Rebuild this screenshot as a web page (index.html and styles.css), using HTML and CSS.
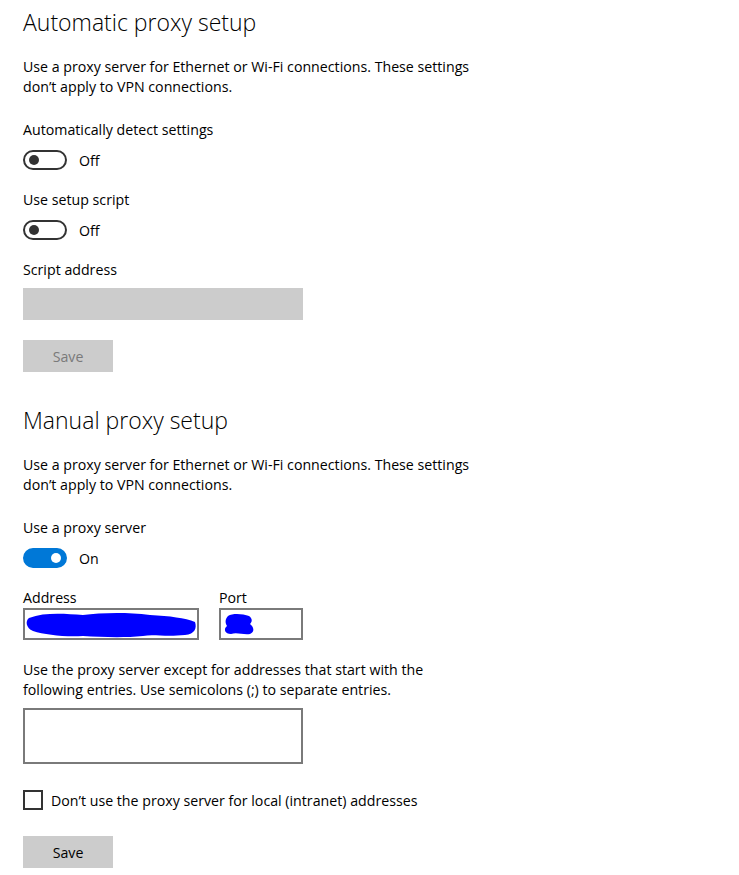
FILE: index.html
```html
<!DOCTYPE html>
<html lang="en">

<head>
    <meta charset="UTF-8">
    <title>Proxy</title>
    <link rel="stylesheet" href="styles.css">
</head>

<body>
    <div class="page">
        <!-- Automatic -->
        <h2 class="title first">Automatic proxy setup</h2>
        <p class="desc">Use a proxy server for Ethernet or Wi-Fi connections. These settings<br>don’t apply to VPN connections.</p>

        <div class="label gap-top">Automatically detect settings</div>
        <div class="toggle-row">
            <span class="toggle"></span>
            <span class="toggle-text">Off</span>
        </div>

        <div class="label gap-top2">Use setup script</div>
        <div class="toggle-row">
            <span class="toggle"></span>
            <span class="toggle-text">Off</span>
        </div>

        <div class="label gap-top2">Script address</div>
        <div class="field wide disabled"></div>
        <button class="btn disabled-btn">Save</button>

        <!-- Manual -->
        <h2 class="title">Manual proxy setup</h2>
        <p class="desc">Use a proxy server for Ethernet or Wi-Fi connections. These settings<br>don’t apply to VPN connections.</p>

        <div class="label gap-top">Use a proxy server</div>
        <div class="toggle-row">
            <span class="toggle on"></span>
            <span class="toggle-text">On</span>
        </div>

        <div class="addr-row">
            <div class="addr-col">
                <div class="label">Address</div>
                <div class="field addr">
                    <svg width="172" height="28" viewBox="0 0 172 28">
                        <path d="M4 8 C20 2 40 4 58 5 C75 3 100 2 125 5 C145 6 160 8 170 12 C172 18 170 24 160 25 C140 27 128 24 118 26 C98 28 76 27 58 26 C40 27 20 25 8 21 C1 18 0 11 4 8 Z" fill="#0000ff"/>
                    </svg>
                </div>
            </div>
            <div class="port-col">
                <div class="label">Port</div>
                <div class="field port">
                    <svg width="80" height="28" viewBox="0 0 80 28">
                        <path d="M7 6 C12 3 22 4 28 6 C32 9 31 12 29 14 C33 17 34 22 29 24 C22 25 16 22 10 24 C4 24 2 19 6 16 C4 13 4 9 7 6 Z" fill="#0000ff"/>
                    </svg>
                </div>
            </div>
        </div>

        <p class="desc gap-top3">Use the proxy server except for addresses that start with the<br>following entries. Use semicolons (;) to separate entries.</p>
        <div class="field wide area"></div>

        <div class="check-row">
            <span class="check"></span>
            <span class="check-text">Don’t use the proxy server for local (intranet) addresses</span>
        </div>

        <button class="btn">Save</button>
    </div>
</body>

</html>
```

FILE: styles.css
```css
body {
    font-family: "Open Sans", Arial, sans-serif;
    margin: 0;
    padding: 0;
    background-color: #ffffff;
    color: #000000;
}

.page {
    padding-left: 23px;
    padding-bottom: 10px;
}

.title {
    font-size: 23px;
    font-weight: 300;
    line-height: 32px;
    margin: 32px 0 19px 0;
    color: #000000;
}

.title.first {
    margin-top: 6px;
}

.desc {
    font-size: 14.2px;
    line-height: 20px;
    margin: 0;
}

.label {
    font-size: 14.2px;
    line-height: 20px;
}

.gap-top {
    margin-top: 23px;
}

.gap-top2 {
    margin-top: 20px;
}

.gap-top3 {
    margin-top: 20px;
}

.toggle-row {
    display: flex;
    align-items: center;
    margin-top: 10px;
    height: 20px;
}

.toggle {
    width: 44px;
    height: 20px;
    box-sizing: border-box;
    border: 2px solid #333333;
    border-radius: 10px;
    position: relative;
}

.toggle::after {
    content: "";
    position: absolute;
    left: 4px;
    top: 3px;
    width: 10px;
    height: 10px;
    border-radius: 50%;
    background-color: #333333;
}

.toggle.on {
    background-color: #0078d7;
    border-color: #0078d7;
}

.toggle.on::after {
    left: auto;
    right: 4px;
    background-color: #ffffff;
}

.toggle-text {
    font-size: 14.2px;
    margin-left: 12px;
}

.field {
    box-sizing: border-box;
    height: 32px;
}

.wide {
    width: 280px;
}

.disabled {
    background-color: #cccccc;
    margin-top: 8px;
}

.btn {
    display: block;
    width: 90px;
    height: 32px;
    border: none;
    background-color: #cccccc;
    color: #000000;
    font-family: "Open Sans", Arial, sans-serif;
    font-size: 14.2px;
    padding: 0;
    margin-top: 26px;
}

.disabled-btn {
    color: #7a7a7a;
    margin-top: 20px;
}

.addr-row {
    display: flex;
    gap: 20px;
    margin-top: 20px;
}

.addr {
    width: 176px;
    border: 2px solid #7a7a7a;
    display: flex;
    align-items: center;
}

.port {
    width: 84px;
    border: 2px solid #7a7a7a;
    display: flex;
    align-items: center;
}

.addr svg,
.port svg {
    display: block;
}

.area {
    height: 56px;
    border: 2px solid #7a7a7a;
    margin-top: 8px;
}

.check-row {
    display: flex;
    align-items: center;
    margin-top: 26px;
    height: 20px;
}

.check {
    width: 20px;
    height: 20px;
    box-sizing: border-box;
    border: 2px solid #333333;
}

.check-text {
    font-size: 14.2px;
    margin-left: 8px;
}
```
